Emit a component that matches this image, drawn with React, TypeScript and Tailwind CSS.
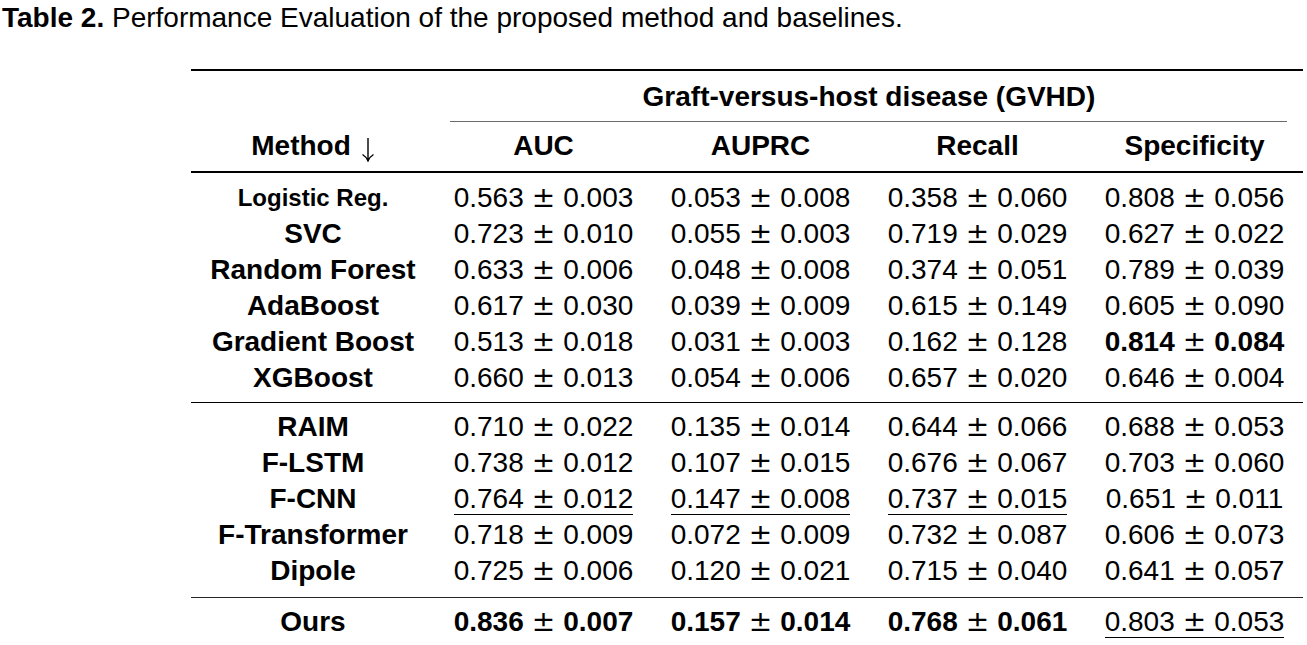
type Row = {
  name: string;
  small?: boolean;
  vals: string[];
  bold?: number[];
  under?: number[];
};

const baselines: Row[] = [
  { name: "Logistic Reg.", small: true, vals: ["0.563|0.003", "0.053|0.008", "0.358|0.060", "0.808|0.056"] },
  { name: "SVC", vals: ["0.723|0.010", "0.055|0.003", "0.719|0.029", "0.627|0.022"] },
  { name: "Random Forest", vals: ["0.633|0.006", "0.048|0.008", "0.374|0.051", "0.789|0.039"] },
  { name: "AdaBoost", vals: ["0.617|0.030", "0.039|0.009", "0.615|0.149", "0.605|0.090"] },
  { name: "Gradient Boost", vals: ["0.513|0.018", "0.031|0.003", "0.162|0.128", "0.814|0.084"], bold: [3] },
  { name: "XGBoost", vals: ["0.660|0.013", "0.054|0.006", "0.657|0.020", "0.646|0.004"] },
];

const deep: Row[] = [
  { name: "RAIM", vals: ["0.710|0.022", "0.135|0.014", "0.644|0.066", "0.688|0.053"] },
  { name: "F-LSTM", vals: ["0.738|0.012", "0.107|0.015", "0.676|0.067", "0.703|0.060"] },
  { name: "F-CNN", vals: ["0.764|0.012", "0.147|0.008", "0.737|0.015", "0.651|0.011"], under: [0, 1, 2] },
  { name: "F-Transformer", vals: ["0.718|0.009", "0.072|0.009", "0.732|0.087", "0.606|0.073"] },
  { name: "Dipole", vals: ["0.725|0.006", "0.120|0.021", "0.715|0.040", "0.641|0.057"] },
];

const ours: Row = {
  name: "Ours",
  vals: ["0.836|0.007", "0.157|0.014", "0.768|0.061", "0.803|0.053"],
  bold: [0, 1, 2],
  under: [3],
};

const grid = "grid grid-cols-[244px_217px_217px_217px_217px] text-center";

function Value({ v, bold, under }: { v: string; bold?: boolean; under?: boolean }) {
  const [a, b] = v.split("|");
  const inner = (
    <>
      <span className={bold ? "font-bold" : ""}>{a}</span>
      <span className="mx-[8px] font-['DejaVu_Sans',sans-serif] font-normal">±</span>
      <span className={bold ? "font-bold" : ""}>{b}</span>
    </>
  );
  if (under) {
    return <span className="inline-block border-b border-black leading-[30px]">{inner}</span>;
  }
  return inner;
}

function TableRow({ row }: { row: Row }) {
  return (
    <div className={`${grid} h-[36px] leading-[36px]`}>
      <div className={row.small ? "font-bold text-[24px]" : "font-bold"}>{row.name}</div>
      {row.vals.map((v, i) => (
        <div key={i} className="whitespace-nowrap">
          <Value v={v} bold={row.bold?.includes(i)} under={row.under?.includes(i)} />
        </div>
      ))}
    </div>
  );
}

// thin math-style down arrow (\downarrow)
function DownArrow() {
  return (
    <svg width="14" height="25" viewBox="0 0 14 25" className="ml-[10px] inline-block align-[-7px]">
      <path d="M7 1V23.5M1.5 17.5C4 19 6 21.5 7 24C8 21.5 10 19 12.5 17.5" fill="none" stroke="black" strokeWidth="1.4" />
    </svg>
  );
}

export default function App() {
  return (
    <div className="w-[1307px] h-[645px] overflow-hidden bg-white text-black font-['Liberation_Sans',Arial,sans-serif] text-[28px]">
      <p className="pt-[2px] pl-[2px] leading-[32px] whitespace-nowrap">
        <span className="font-bold">Table 2.</span> Performance Evaluation of the proposed method and baselines.
      </p>

      <div className="ml-[191px] mt-[35px] w-[1112px]">
        <div className="h-[2px] bg-black" />

        <div className="flex h-[50px] items-center pt-[2px] leading-[36px]">
          <div className="w-[244px]" />
          <div className="w-[868px] text-center font-bold">Graft-versus-host disease (GVHD)</div>
        </div>
        <div className="ml-[259px] mr-[16px] h-px bg-[#6b6b6b]" />

        <div className={`${grid} h-[49px] items-center pb-[2px] font-bold leading-[36px]`}>
          <div>
            Method
            <DownArrow />
          </div>
          <div>AUC</div>
          <div>AUPRC</div>
          <div>Recall</div>
          <div>Specificity</div>
        </div>
        <div className="h-[1.5px] bg-black" />

        <div className="pt-[7px] pb-[6px]">
          {baselines.map((r) => (
            <TableRow key={r.name} row={r} />
          ))}
        </div>
        <div className="h-[1.5px] bg-black" />

        <div className="pt-[6px] pb-[8px]">
          {deep.map((r) => (
            <TableRow key={r.name} row={r} />
          ))}
        </div>
        <div className="h-px bg-[#262626]" />

        <div className="pt-[6px]">
          <TableRow row={ours} />
        </div>
      </div>
    </div>
  );
}
